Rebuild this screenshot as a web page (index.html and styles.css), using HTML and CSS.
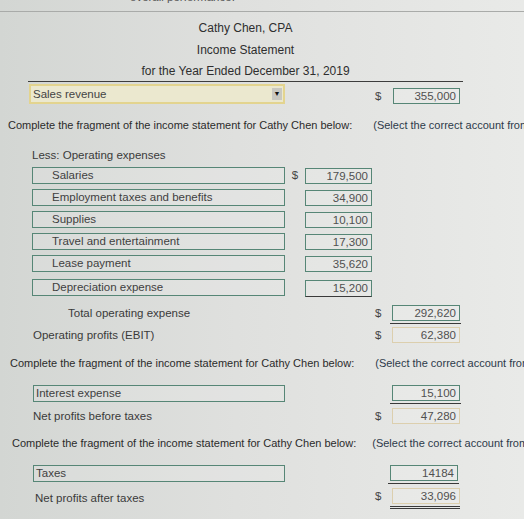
FILE: index.html
```html
<!DOCTYPE html>
<html>
<head>
    <meta charset="UTF-8">
    <title>Income Statement</title>
    <link rel="stylesheet" href="styles.css">
</head>
<body>
    <div class="top">
        <div class="cut">overall performance.</div>
    </div>

    <div class="heading">
        <p>Cathy Chen, CPA</p>
        <p>Income Statement</p>
        <p class="last">for the Year Ended December 31, 2019</p>
    </div>

    <div class="row sales">
        <div class="select">
            <span>Sales revenue</span>
            <span class="arrow">&#9660;</span>
        </div>
        <div></div>
        <div></div>
        <div class="dollar">$</div>
        <div class="val">355,000</div>
    </div>

    <div class="note note1">Complete the fragment of the income statement for Cathy Chen below:<span class="hint">(Select the correct account from the drop-down menus.)</span></div>

    <div class="less">Less: Operating expenses</div>

    <!-- operating expense lines -->
    <div class="row exp first">
        <div class="label">Salaries</div>
        <div class="dollar1">$</div>
        <div class="val">179,500</div>
    </div>
    <div class="row exp">
        <div class="label">Employment taxes and benefits</div>
        <div></div>
        <div class="val">34,900</div>
    </div>
    <div class="row exp">
        <div class="label">Supplies</div>
        <div></div>
        <div class="val">10,100</div>
    </div>
    <div class="row exp">
        <div class="label">Travel and entertainment</div>
        <div></div>
        <div class="val">17,300</div>
    </div>
    <div class="row exp">
        <div class="label">Lease payment</div>
        <div></div>
        <div class="val">35,620</div>
    </div>
    <div class="row exp lastexp">
        <div class="label">Depreciation expense</div>
        <div></div>
        <div class="val under">15,200</div>
    </div>

    <div class="row total">
        <div class="text indent">Total operating expense</div>
        <div></div>
        <div></div>
        <div class="dollar">$</div>
        <div class="ul"><div class="val">292,620</div></div>
    </div>
    <div class="row result ebit">
        <div class="text">Operating profits (EBIT)</div>
        <div></div>
        <div></div>
        <div class="dollar">$</div>
        <div class="val calc">62,380</div>
    </div>

    <div class="note note2">Complete the fragment of the income statement for Cathy Chen below:<span class="hint">(Select the correct account from the drop-down menus.)</span></div>

    <div class="row boxed interest">
        <div class="label plain">Interest expense</div>
        <div></div>
        <div></div>
        <div></div>
        <div class="ul"><div class="val">15,100</div></div>
    </div>
    <div class="row result npbt">
        <div class="text">Net profits before taxes</div>
        <div></div>
        <div></div>
        <div class="dollar">$</div>
        <div class="val calc">47,280</div>
    </div>

    <div class="note note3">Complete the fragment of the income statement for Cathy Chen below:<span class="hint">(Select the correct account from the drop-down menus.)</span></div>

    <div class="row boxed taxes">
        <div class="label plain">Taxes</div>
        <div></div>
        <div></div>
        <div></div>
        <div class="ul"><div class="val">14184</div></div>
    </div>
    <div class="row result npat">
        <div class="text">Net profits after taxes</div>
        <div></div>
        <div></div>
        <div class="dollar">$</div>
        <div class="dul"><div class="val calc">33,096</div></div>
    </div>
</body>
</html>
```

FILE: styles.css
```css
html, body {
    margin: 0;
    padding: 0;
}
body {
    width: 524px;
    height: 519px;
    overflow: hidden;
    background: linear-gradient(to right, #d3d6d3 0%, #dfe0de 45%, #e9eae8 100%);
    font-family: "Liberation Sans", Arial, sans-serif;
    font-size: 11.5px;
    color: #3a3a3a;
}
p {
    margin: 0;
}
.top {
    height: 11px;
    overflow: hidden;
    border-bottom: 1px solid #a9aba9;
}
.cut {
    margin-top: -10px;
    padding-left: 130px;
    line-height: 14px;
    color: #555;
}
.heading {
    margin-left: 28px;
    width: 435px;
    padding-top: 5px;
    text-align: center;
    border-bottom: 1.5px solid #3d3d3d;
    color: #2e2e2e;
    font-size: 12px;
}
.heading p {
    height: 22px;
    line-height: 22px;
}
.heading p.last {
    height: 20px;
    line-height: 20px;
}

/* columns: label | $ | value | $ | total */
.row {
    display: grid;
    grid-template-columns: 253px 20px 67px 20px 68px;
    padding-left: 32px;
    align-items: start;
}
.select {
    margin-left: -3px;
    height: 16px;
    border: 2px solid #e3d48f;
    background: #ebe8cf;
    display: flex;
    justify-content: space-between;
    align-items: center;
    padding-left: 2px;
    color: #444;
}
.arrow {
    width: 10px;
    height: 12px;
    margin-right: 1px;
    background: #c9c8c0;
    font-size: 7px;
    line-height: 12px;
    text-align: center;
    color: #111;
}
.sales {
    margin-top: 2px;
}
.sales .dollar,
.sales .val {
    margin-top: 4px;
}
.sales .val {
    margin-left: 1px;
}
.note {
    padding-left: 8px;
    line-height: 16px;
    white-space: nowrap;
    overflow: hidden;
    font-size: 11px;
    color: #2b2b2b;
}
.hint {
    margin-left: 21px;
    color: #2d3a4a;
}
.note1 {
    margin-top: 13px;
}
.note2 {
    margin-top: 12px;
    padding-left: 10px;
}
.note3 {
    margin-top: 11px;
    padding-left: 12px;
}
.note3 .hint {
    margin-left: 16px;
}
.less {
    margin-top: 14px;
    padding-left: 32px;
    line-height: 16px;
}
.label {
    height: 15px;
    line-height: 15px;
    border: 1px solid #568676;
    background: rgba(255, 255, 255, 0.12);
    padding-left: 19px;
    color: #3f3f3f;
}
.label.plain {
    padding-left: 2px;
    margin-left: 1px;
    width: 248px;
}
.val {
    height: 14px;
    line-height: 14px;
    border: 1px solid #568676;
    background: rgba(255, 255, 255, 0.12);
    text-align: right;
    padding-right: 3px;
    color: #505050;
}
.val.calc {
    border-color: #dccfae;
}
.val.under {
    height: 15px;
    border-bottom: 1px solid #3a3a3a;
    margin-top: 1px;
}
.exp {
    margin-top: 5px;
}
.exp.first {
    margin-top: 4px;
}
.exp.lastexp {
    margin-top: 7px;
}
.exp .val {
    margin-top: 1px;
}
.dollar1 {
    text-align: center;
    padding-top: 2px;
    color: #444;
}
.dollar {
    padding-left: 3px;
    line-height: 16px;
    color: #444;
}
.text {
    line-height: 16px;
    padding-left: 1px;
}
.text.indent {
    padding-left: 36px;
}
.ul {
    padding-bottom: 2px;
    border-bottom: 1px solid #3a3a3a;
    margin-left: -2px;
    margin-right: -1px;
    padding-left: 2px;
    padding-right: 1px;
}
.dul {
    padding-bottom: 2px;
    border-bottom: 3px double #3a3a3a;
    margin-left: -2px;
    padding-left: 2px;
}
.total {
    margin-top: 8px;
}
.ebit {
    margin-top: 3px;
}
.interest {
    margin-top: 14px;
}
.npbt {
    margin-top: 4px;
}
.taxes {
    margin-top: 14px;
}
.taxes .ul {
    margin-left: -4px;
    margin-right: 1px;
}
.npat {
    margin-top: 4px;
}
.npat .text {
    padding-top: 2px;
    padding-left: 3px;
}
```
